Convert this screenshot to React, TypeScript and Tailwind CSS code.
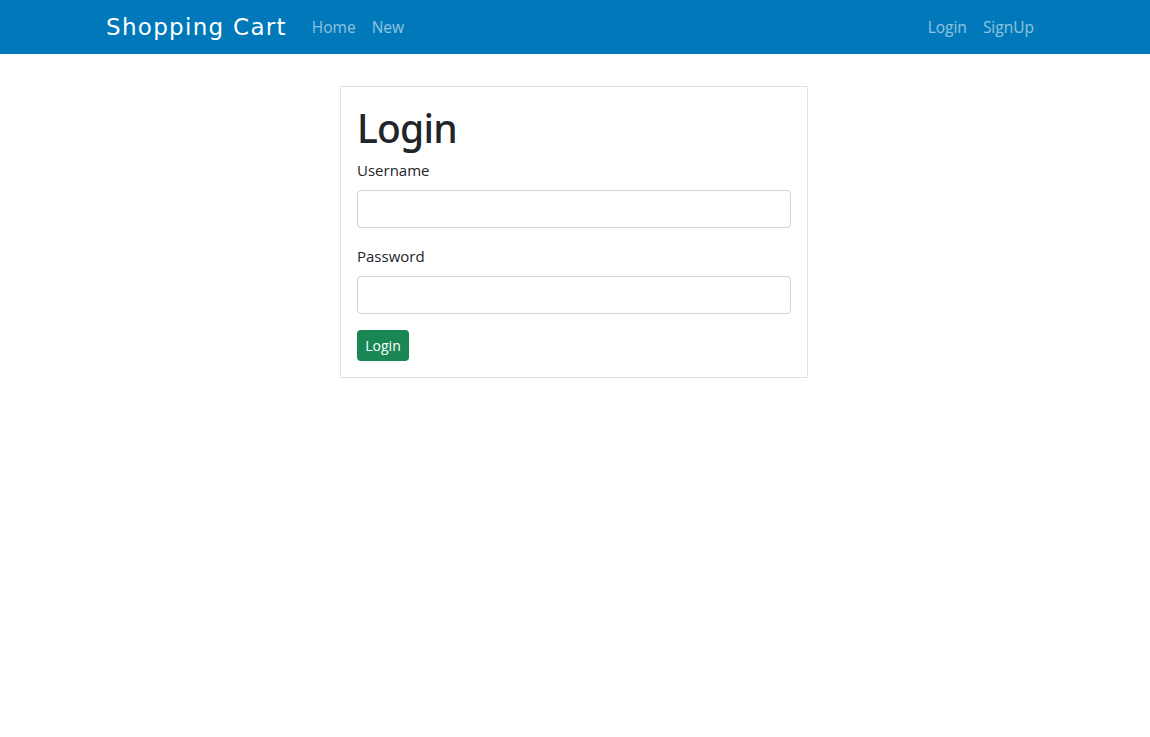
// Login page with the top nav bar

const navLink = "px-2 text-[15.5px] leading-6 text-white/55";

function Field({ label, type }: { label: string; type: string }) {
  return (
    <div className="mb-4">
      <label className="mb-2 block text-[15px] leading-6 text-[#212529]">{label}</label>
      <input
        type={type}
        className="block h-[38px] w-full rounded border border-[#ced4da] bg-white px-3 py-1.5"
      />
    </div>
  );
}

export default function App() {
  return (
    <div className="min-h-[737px] bg-white font-['Open_Sans','Noto_Sans',sans-serif]">
      <nav className="h-[54px] bg-[#0078b9] pr-[2px]">
        <div className="mx-auto flex h-full w-[960px] items-center justify-between px-3">
          <div className="flex items-center">
            <a className="mr-[17px] font-['DejaVu_Sans',sans-serif] text-[23px] leading-[30px] tracking-[1.3px] text-white">
              Shopping Cart
            </a>
            <a className={navLink}>Home</a>
            <a className={navLink}>New</a>
          </div>
          <div className="flex items-center">
            <a className={navLink}>Login</a>
            <a className={navLink}>SignUp</a>
          </div>
        </div>
      </nav>
      <main className="flex justify-center pr-[2px] pt-8">
        <form className="w-[468px] border border-[#dee2e6] p-4">
          <h1 className="mb-[7px] pt-px font-['Noto_Sans',sans-serif] text-[39px] font-medium leading-[47px] tracking-[-0.8px] text-[#212529]">
            Login
          </h1>
          <Field label="Username" type="text" />
          <Field label="Password" type="password" />
          <button
            type="button"
            className="block h-[31px] w-[52px] rounded bg-[#198754] text-[14px] leading-[21px] text-white"
          >
            Login
          </button>
        </form>
      </main>
    </div>
  );
}
